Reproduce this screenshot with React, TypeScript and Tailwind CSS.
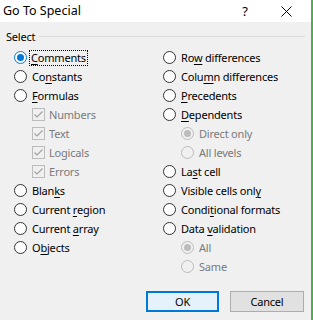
import React from "react";

const font = { fontFamily: '"Noto Sans", "Open Sans", sans-serif' };

function Radio({ checked, disabled }: { checked?: boolean; disabled?: boolean }) {
  const border = disabled ? "#bcbcbc" : checked ? "#0078d7" : "#333333";
  const dot = disabled ? "#bcbcbc" : "#0078d7";
  return (
    <svg width="13" height="13" viewBox="0 0 13 13" className="shrink-0">
      <circle cx="6.5" cy="6.5" r="6" fill={disabled ? "#f0f0f0" : "#ffffff"} stroke={border} strokeWidth="1" />
      {checked && <circle cx="6.5" cy="6.5" r="3.5" fill={dot} />}
    </svg>
  );
}

function Check() {
  return (
    <svg width="13" height="13" viewBox="0 0 13 13" className="shrink-0">
      <rect x="0.5" y="0.5" width="12" height="12" fill="#f0f0f0" stroke="#bcbcbc" strokeWidth="1" />
      <path d="M2.5 6.5 L5 9 L10.5 3.5" fill="none" stroke="#a0a0a0" strokeWidth="1.1" />
    </svg>
  );
}

function Label({ pre, ch, post, disabled }: { pre?: string; ch?: string; post?: string; disabled?: boolean }) {
  return (
    <span className={disabled ? "text-[#7a7a7a]" : "text-[#000000]"}>
      {pre}
      {ch && <span className="underline underline-offset-2">{ch}</span>}
      {post}
    </span>
  );
}

type Item = {
  kind: "radio" | "check";
  pre?: string;
  ch?: string;
  post?: string;
  sub?: boolean;
  disabled?: boolean;
  checked?: boolean;
  focus?: boolean;
};

function Row({ it }: { it: Item }) {
  return (
    <div className={`flex items-center h-[19px] ${it.sub ? "pl-[18px]" : ""} ${it.kind === "check" ? "gap-[4px]" : "gap-[5px]"}`}>
      {it.kind === "radio" ? <Radio checked={it.checked} disabled={it.disabled} /> : <Check />}
      {it.focus ? (
        <span className="outline outline-1 outline-dotted outline-[#000] px-[1px] -ml-[2px] leading-[14px]">
          <Label pre={it.pre} ch={it.ch} post={it.post} disabled={it.disabled} />
        </span>
      ) : (
        <Label pre={it.pre} ch={it.ch} post={it.post} disabled={it.disabled} />
      )}
    </div>
  );
}

const left: Item[] = [
  { kind: "radio", ch: "C", post: "omments", checked: true, focus: true },
  { kind: "radio", pre: "Co", ch: "n", post: "stants" },
  { kind: "radio", ch: "F", post: "ormulas" },
  { kind: "check", pre: "Numbers", sub: true, disabled: true },
  { kind: "check", pre: "Text", sub: true, disabled: true },
  { kind: "check", pre: "Logicals", sub: true, disabled: true },
  { kind: "check", pre: "Errors", sub: true, disabled: true },
  { kind: "radio", pre: "Blan", ch: "k", post: "s" },
  { kind: "radio", pre: "Current ", ch: "r", post: "egion" },
  { kind: "radio", pre: "Current ", ch: "a", post: "rray" },
  { kind: "radio", pre: "O", ch: "b", post: "jects" },
];

const right: Item[] = [
  { kind: "radio", pre: "Ro", ch: "w", post: " differences" },
  { kind: "radio", pre: "Colu", ch: "m", post: "n differences" },
  { kind: "radio", ch: "P", post: "recedents" },
  { kind: "radio", ch: "D", post: "ependents" },
  { kind: "radio", pre: "Direct only", sub: true, disabled: true, checked: true },
  { kind: "radio", pre: "All levels", sub: true, disabled: true },
  { kind: "radio", pre: "La", ch: "s", post: "t cell" },
  { kind: "radio", pre: "Visible cells onl", ch: "y" },
  { kind: "radio", pre: "Condi", ch: "t", post: "ional formats" },
  { kind: "radio", pre: "Data ", ch: "v", post: "alidation" },
  { kind: "radio", pre: "All", sub: true, disabled: true, checked: true },
  { kind: "radio", pre: "Same", sub: true, disabled: true },
];

export default function App() {
  return (
    <div style={font} className="relative w-[313px] h-[320px] overflow-hidden bg-[#f0f0f0] text-[11px] tracking-[-0.2px] leading-none">
      <div className="h-[22px] bg-white flex items-center pl-[3px] text-[12.5px] tracking-normal text-black">
        <span className="flex-1">Go To Special</span>
        <span className="w-[20px] text-center mr-[26px] text-[13px]">?</span>
        <svg width="11" height="11" viewBox="0 0 11 11" className="mr-[21px]">
          <path d="M0.5 0.5 L10.5 10.5 M10.5 0.5 L0.5 10.5" stroke="#000" strokeWidth="1" />
        </svg>
      </div>
      <div className="pl-[6px] pr-[8px] pt-[7px]">
        <div className="flex items-center h-[14px]">
          <span className="text-black pr-[4px]">Select</span>
          <div className="flex-1 h-px bg-[#dcdcdc]" />
        </div>
      </div>
      <div className="flex pt-[5px]">
        <div className="w-[163px] pl-[14px] flex flex-col">
          {left.map((it, i) => (
            <Row key={i} it={it} />
          ))}
        </div>
        <div className="flex flex-col">
          {right.map((it, i) => (
            <Row key={i} it={it} />
          ))}
        </div>
      </div>
      <div className="absolute left-0 top-[291px] w-full flex">
        <div className="ml-[146px] w-[73px] h-[21px] bg-[#e5f1fb] border-2 border-[#0078d7] flex items-center justify-center text-black">
          OK
        </div>
        <div className="ml-[11px] w-[74px] h-[21px] bg-[#e1e1e1] border border-[#adadad] flex items-center justify-center text-black">
          Cancel
        </div>
      </div>
      <div className="absolute right-0 top-0 h-full w-[2px] bg-[#4caf50]" />
    </div>
  );
}
